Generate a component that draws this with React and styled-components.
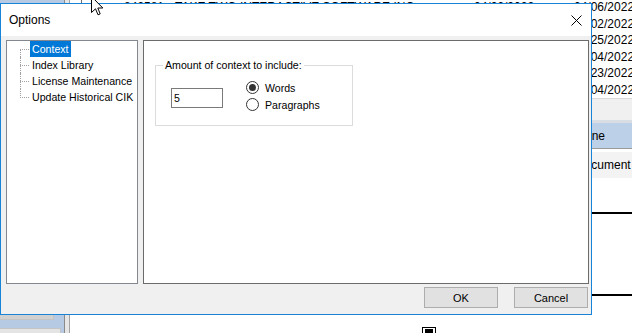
import React from 'react'
import styled, { createGlobalStyle } from 'styled-components'

const GlobalStyle = createGlobalStyle`
  html, body {
    margin: 0;
    padding: 0;
  }
  body {
    width: 632px;
    height: 333px;
    overflow: hidden;
    background: #fff;
    font-family: "Liberation Sans", Arial, sans-serif;
  }
  * {
    box-sizing: border-box;
  }
`

const Screen = styled.div`
  position: relative;
  display: flex;
  width: 632px;
  height: 333px;
  overflow: hidden;
  background: #fff;
`

/* ---- application behind the dialog ---- */

const Sidebar = styled.div`
  flex: 0 0 64px;
  display: flex;
  flex-direction: column;
  gap: 8px;
  padding-top: 308px;
  background: #b6cae3;
`

const SideButton = styled.div`
  width: ${p => p.$w}px;
  height: ${p => p.$h}px;
  flex: 0 0 auto;
  background: ${p => p.$bg};
  border: 1px solid #c4c4c4;
  border-left: 0;
`

const Splitter = styled.div`
  flex: 0 0 6px;
  background: #e6e6e6;
  border-left: 1px solid #8a8a8a;
  border-right: 1px solid #a4a4a4;
`

const Main = styled.div`
  flex: 1;
  display: flex;
  flex-direction: column;
  min-width: 0;

  & > * {
    flex-shrink: 0;
  }
`

const ListArea = styled.div`
  height: 99px;
  margin-top: -1px;
  border-left: 11px solid #fff;
`

const ListRow = styled.div`
  display: grid;
  grid-template-columns: 42px 51px 299px 100px auto;
  height: 16.5px;
  align-items: center;
  border-left: 1px solid #6e6e6e;
  font-size: 12px;
  color: #000;
  white-space: nowrap;
  overflow: hidden;
`

const HScroll = styled.div`
  height: 22px;
  background: #f0f0f0;
  border-top: 1px solid #dadada;
`

const PaneHeader = styled.div`
  height: 29px;
  display: flex;
  align-items: center;
  padding-left: 497px;
  background: #bcd0e8;
  border-top: 3px solid #d9dee5;
  border-bottom: 1px solid #9a9a9a;
  font-size: 12px;
  color: #000;
`

const DocRow = styled.div`
  height: 26px;
  margin-top: 3px;
  display: flex;
  align-items: center;
  padding-left: 506px;
  background: #f3f3f3;
  font-size: 12px;
  color: #000;
`

const Rule = styled.div`
  height: 2px;
  margin-top: ${p => p.$top}px;
  margin-left: 200px;
  background: #000;
`

const Footer = styled.div`
  margin-top: 31px;
  padding-left: 352px;
  line-height: 0;
`

/* ---- dialog ---- */

const Dialog = styled.div`
  position: absolute;
  left: 0;
  top: 3px;
  width: 592px;
  height: 312px;
  display: flex;
  flex-direction: column;
  background: #f0f0f0;
  border: 1px solid #1883d7;
  color: #000;
  font-size: 10.6px;
`

const TitleBar = styled.div`
  height: 32px;
  display: flex;
  align-items: center;
  justify-content: space-between;
  padding: 0 9px 0 8px;
  background: #fff;
  font-size: 12px;
`

const Body = styled.div`
  display: grid;
  grid-template-columns: 132px 446px;
  grid-template-rows: 244px 21px;
  column-gap: 5px;
  row-gap: 3px;
  padding: 4px 2px 0 5px;
`

const TreePanel = styled.div`
  background: #fff;
  border: 1px solid #828790;
`

const TreeItem = styled.div`
  position: relative;
  height: 16px;
  padding-left: 23px;

  &::before {
    content: "";
    position: absolute;
    left: 13px;
    top: 8px;
    width: 9px;
    border-top: 1px dotted #a0a0a0;
  }

  &::after {
    content: "";
    position: absolute;
    left: 13px;
    top: ${p => (p.$first ? 8 : 0)}px;
    height: ${p => (p.$first ? 8 : p.$last ? 9 : 16)}px;
    border-left: 1px dotted #a0a0a0;
  }
`

const TreeLabel = styled.span`
  display: inline-block;
  height: 16px;
  line-height: 16px;
  padding: 0 2px;
  white-space: nowrap;
  background: ${p => (p.$selected ? '#0078d7' : 'transparent')};
  color: ${p => (p.$selected ? '#fff' : '#000')};
`

const ContentPanel = styled.div`
  background: #fff;
  border: 1px solid #6b6b6b;
  padding: 24px 0 0 11px;
`

const GroupBox = styled.div`
  position: relative;
  width: 198px;
  height: 61px;
  display: flex;
  align-items: flex-start;
  border: 1px solid #dcdcdc;
`

const Legend = styled.span`
  position: absolute;
  left: 7px;
  top: -7px;
  padding: 0 2px;
  line-height: 13px;
  background: #fff;
  white-space: nowrap;
`

const TextBox = styled.div`
  width: 52px;
  height: 20px;
  margin: 22px 0 0 15px;
  display: flex;
  align-items: center;
  padding-left: 2px;
  background: #fff;
  border: 1px solid #7a7a7a;
`

const RadioGroup = styled.div`
  display: flex;
  flex-direction: column;
  margin: 13px 0 0 23px;
`

const RadioRow = styled.label`
  height: 17px;
  display: flex;
  align-items: center;
  gap: 6px;
  white-space: nowrap;
`

const RadioCircle = styled.span`
  width: 13px;
  height: 13px;
  display: flex;
  align-items: center;
  justify-content: center;
  border: 1px solid #333;
  border-radius: 50%;
  background: #fff;

  &::after {
    content: "";
    width: 7px;
    height: 7px;
    border-radius: 50%;
    background: ${p => (p.$checked ? '#333' : 'transparent')};
  }
`

const ButtonRow = styled.div`
  grid-column: 1 / 3;
  display: flex;
  justify-content: flex-end;
  gap: 16px;
  padding-right: 1px;
`

const Button = styled.button`
  width: 74px;
  height: 21px;
  padding: 0;
  background: #e1e1e1;
  border: 1px solid #adadad;
  font: 11px "Liberation Sans", Arial, sans-serif;
  color: #000;
`

const Cursor = styled.svg`
  position: absolute;
  left: 91px;
  top: -4px;
`

const rows = [
  ['846581', 'TAKE TWO INTERACTIVE SOFTWARE INC', '04/06/2022', '04/06/2022'],
  ['', '', '', '05/02/2022'],
  ['', '', '', '03/25/2022'],
  ['', '', '', '03/04/2022'],
  ['', '', '', '02/23/2022'],
  ['', '', '', '02/04/2022']
]

const treeItems = ['Context', 'Index Library', 'License Maintenance', 'Update Historical CIK']

export default function App() {
  return (
    <Screen>
      <GlobalStyle />

      <Sidebar>
        <SideButton $w={54} $h={12} $bg="#d0d0d0" />
        <SideButton $w={61} $h={14} $bg="#e4e4e4" />
      </Sidebar>
      <Splitter />
      <Main>
        <ListArea>
          {rows.map((r, i) => (
            <ListRow key={i}>
              <span />
              <span>{r[0]}</span>
              <span>{r[1]}</span>
              <span>{r[2]}</span>
              <span>{r[3]}</span>
            </ListRow>
          ))}
        </ListArea>
        <HScroll />
        <PaneHeader>Outline</PaneHeader>
        <DocRow>Document</DocRow>
        <Rule $top={34} />
        <Rule $top={80} />
        <Footer>
          <svg width="14" height="14" viewBox="0 0 14 14">
            <rect x="0.5" y="0.5" width="13" height="13" fill="#fff" stroke="#000" />
            <rect x="3" y="2" width="8" height="4" fill="#000" />
          </svg>
        </Footer>
      </Main>

      <Dialog>
        <TitleBar>
          <span>Options</span>
          <svg width="11" height="11" viewBox="0 0 11 11">
            <path d="M0.5 0.5 L10.5 10.5 M10.5 0.5 L0.5 10.5" stroke="#000" strokeWidth="1" />
          </svg>
        </TitleBar>
        <Body>
          <TreePanel>
            {treeItems.map((t, i) => (
              <TreeItem key={t} $first={i === 0} $last={i === treeItems.length - 1}>
                <TreeLabel $selected={i === 0}>{t}</TreeLabel>
              </TreeItem>
            ))}
          </TreePanel>
          <ContentPanel>
            <GroupBox>
              <Legend>Amount of context to include:</Legend>
              <TextBox>5</TextBox>
              <RadioGroup>
                <RadioRow>
                  <RadioCircle $checked />
                  Words
                </RadioRow>
                <RadioRow>
                  <RadioCircle />
                  Paragraphs
                </RadioRow>
              </RadioGroup>
            </GroupBox>
          </ContentPanel>
          <ButtonRow>
            <Button>OK</Button>
            <Button>Cancel</Button>
          </ButtonRow>
        </Body>
      </Dialog>

      <Cursor width="13" height="21" viewBox="0 0 13 21">
        <path d="M0.5 0.5 L0.5 16.5 L4.5 12.8 L7 18.8 L9.2 17.9 L6.8 12 L11.8 12 Z" fill="#fff" stroke="#000" strokeWidth="1" strokeLinejoin="miter" />
      </Cursor>
    </Screen>
  )
}
